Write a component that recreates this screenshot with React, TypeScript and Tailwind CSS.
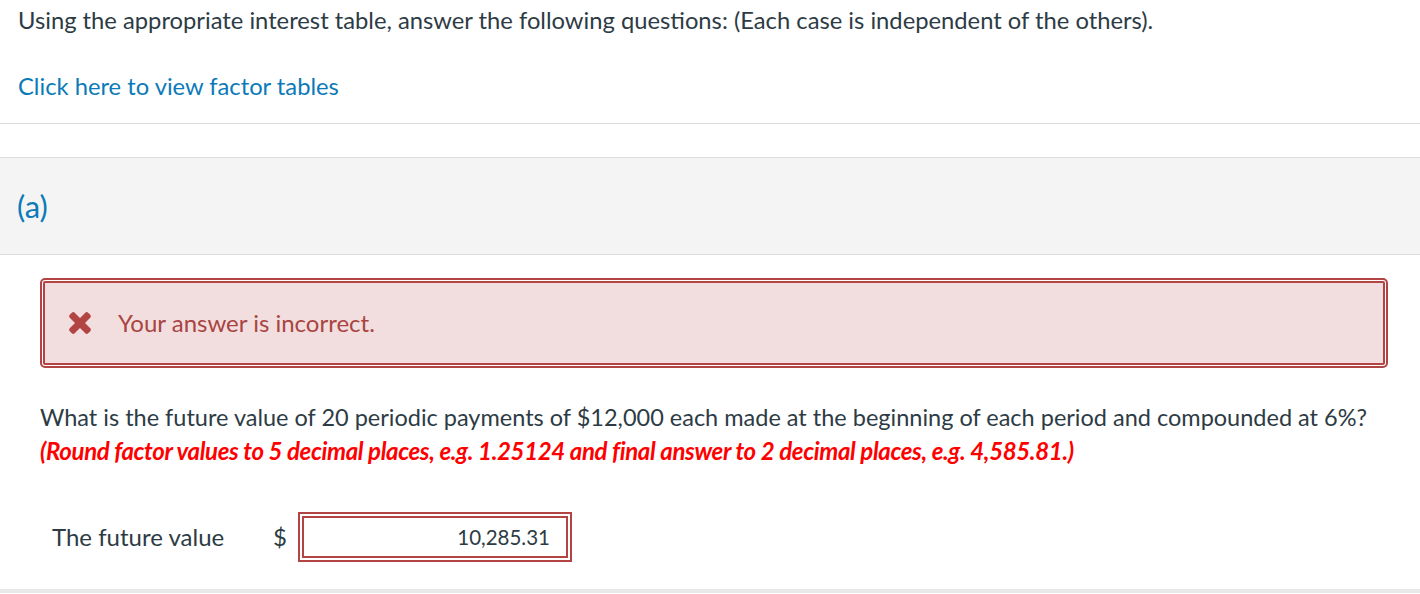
export default function App() {
  return (
    <div className="min-h-screen bg-white text-[#2d3b45] font-['Lato',sans-serif] text-[24px] leading-[36px]">
      {/* Intro */}
      <div className="px-[18px] pt-[2px] pb-[19px] border-b border-[#dcdcdc] text-[23.75px]">
        <p>Using the appropriate interest table, answer the following questions: (Each case is independent of the others).</p>
        <p className="mt-[30px]">
          <a href="#" className="text-[#0b7ab8]">Click here to view factor tables</a>
        </p>
      </div>

      <div className="h-[33px]" />

      {/* Part header */}
      <div className="bg-[#f4f4f4] border-y border-[#dcdcdc] h-[98px] flex items-center px-[17px]">
        <span className="text-[31px] text-[#0b7ab8]">(a)</span>
      </div>

      {/* Feedback + question */}
      <div className="pl-[40px] pr-[32px] pt-[23px] pb-[27px] border-b-4 border-[#e8e8e8]">
        <div className="rounded-[5px] border-2 border-[#b34444] p-[1px]">
          <div className="h-[84px] rounded-[2px] bg-[#f2dede] border-2 border-[#b34444] flex items-center pl-[23px] gap-[26px] text-[#a94442]">
            <svg width="24" height="24" viewBox="0 0 24 24" className="shrink-0">
              <g fill="#b24444">
                <rect x="-1" y="8.5" width="26" height="7" rx="2" transform="rotate(45 12 12)" />
                <rect x="-1" y="8.5" width="26" height="7" rx="2" transform="rotate(-45 12 12)" />
              </g>
            </svg>
            <span>Your answer is incorrect.</span>
          </div>
        </div>

        <p className="mt-[31px] text-[23.5px] whitespace-nowrap">
          What is the future value of 20 periodic payments of $12,000 each made at the beginning of each period and compounded at 6%?
        </p>
        <p className="text-[#ff0000] font-bold italic tracking-[-0.35px] leading-[32px]">
          (Round factor values to 5 decimal places, e.g. 1.25124 and final answer to 2 decimal places, e.g. 4,585.81.)
        </p>

        <div className="mt-[45px] flex items-center pl-[12px]">
          <span className="w-[221px]">The future value</span>
          <span className="w-[25px]">$</span>
          <div className="w-[274px] h-[50px] border-2 border-[#b34444] p-[2px]">
            <div className="h-full border-2 border-[#b34444] flex items-center justify-end pr-[16px] text-[20.5px]">
              10,285.31
            </div>
          </div>
        </div>
      </div>
    </div>
  );
}
